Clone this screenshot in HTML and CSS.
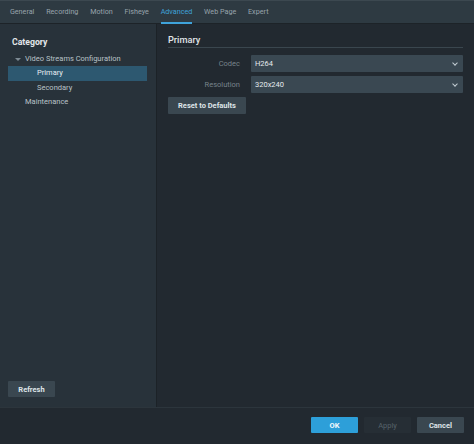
FILE: index.html
```html
<!DOCTYPE html>
<html lang="en">

<head>
  <meta charset="UTF-8">
  <meta name="viewport" content="width=device-width, initial-scale=1.0">
  <title>Camera Settings</title>
  <link rel="stylesheet" href="styles.css">
</head>

<body>
  <div class="dialog">
    <div class="tabs">
      <span class="tab">General</span>
      <span class="tab">Recording</span>
      <span class="tab">Motion</span>
      <span class="tab">Fisheye</span>
      <span class="tab active">Advanced</span>
      <span class="tab">Web Page</span>
      <span class="tab">Expert</span>
    </div>

    <div class="main">
      <div class="sidebar">
        <div class="category">Category</div>
        <ul class="tree">
          <li class="node">
            <span class="arrow"></span>Video Streams Configuration
          </li>
          <li class="node child selected">Primary</li>
          <li class="node child">Secondary</li>
          <li class="node">Maintenance</li>
        </ul>
        <div class="sidebar-footer">
          <button class="btn">Refresh</button>
        </div>
      </div>

      <div class="content">
        <div class="section-title">Primary</div>
        <div class="field">
          <label class="field-label">Codec</label>
          <div class="select">H264<span class="chevron"></span></div>
        </div>
        <div class="field">
          <label class="field-label">Resolution</label>
          <div class="select">320x240<span class="chevron"></span></div>
        </div>
        <button class="btn reset-btn">Reset to Defaults</button>
      </div>
    </div>

    <div class="footer">
      <button class="btn btn-primary">OK</button>
      <button class="btn btn-disabled">Apply</button>
      <button class="btn">Cancel</button>
    </div>
  </div>
</body>
</html>
```

FILE: styles.css
```css
html,
body {
  margin: 0;
  padding: 0;
  background-color: #222930;
}

body {
  font-family: Roboto, "Liberation Sans", sans-serif;
  font-size: 7.5px;
  color: #c9d0d5;
}

.dialog {
  width: 474px;
  height: 444px;
  display: flex;
  flex-direction: column;
}

/* top tab strip */
.tabs {
  height: 22px;
  display: flex;
  align-items: stretch;
  padding-left: 4px;
  background-color: #2e3a42;
  border-top: 1px solid #3c4850;
  border-bottom: 1px solid #1d2328;
}

.tab {
  display: flex;
  align-items: center;
  margin: 0 5.9px -1px;
  font-size: 7.2px;
  color: #98a4ac;
  border-bottom: 2px solid transparent;
}

.tab.active {
  color: #3fa3da;
  border-bottom-color: #3fa3da;
}

.main {
  height: 383px;
  display: flex;
}

.sidebar {
  width: 156px;
  display: flex;
  flex-direction: column;
  background-color: #28323a;
  border-right: 1px solid #1c2227;
}

.category {
  font-size: 8.7px;
  font-weight: bold;
  color: #e3e7ea;
  padding: 13px 0 0 12px;
  height: 15px;
}

.tree {
  list-style: none;
  margin: 0 0 0 8px;
  padding: 0;
  width: 139px;
}

.node {
  height: 14.4px;
  line-height: 14.4px;
  padding-left: 17px;
  color: #b9c2c8;
  position: relative;
}

.node.child {
  padding-left: 29px;
}

.node.selected {
  background-color: #2d5870;
  color: #e8eef2;
}

.arrow {
  position: absolute;
  left: 7px;
  top: 6px;
  border-left: 3px solid transparent;
  border-right: 3px solid transparent;
  border-top: 3px solid #7d8a93;
}

.sidebar-footer {
  margin-top: auto;
  padding: 0 0 10px 8px;
}

.content {
  flex: 1;
  padding: 10px 11px 0 11px;
}

.section-title {
  font-size: 9.2px;
  font-weight: 500;
  color: #e0e5e8;
  padding-bottom: 2px;
  border-bottom: 1px solid #3a464e;
  margin-bottom: 7px;
}

.field {
  display: flex;
  align-items: center;
  margin-bottom: 4px;
}

.field-label {
  width: 72px;
  text-align: right;
  padding-right: 11px;
  color: #77838b;
}

.select {
  flex: 1;
  height: 17px;
  display: flex;
  align-items: center;
  justify-content: space-between;
  padding: 0 6px 0 4px;
  background-color: #3a4852;
  color: #e6ebee;
  border-radius: 1px;
}

.chevron {
  width: 3px;
  height: 3px;
  border-right: 1.3px solid #c3ccd2;
  border-bottom: 1.3px solid #c3ccd2;
  transform: rotate(45deg);
  margin-top: -2px;
}

.btn {
  font-family: inherit;
  font-size: 7.5px;
  font-weight: bold;
  height: 16px;
  min-width: 47px;
  padding: 0 8px;
  border: none;
  border-radius: 1px;
  background-color: #3a4750;
  color: #dfe5e9;
}

.reset-btn {
  height: 17px;
  margin-top: 0;
  width: 78px;
  padding: 0;
}

.footer {
  flex: 1;
  display: flex;
  justify-content: flex-end;
  align-items: flex-start;
  gap: 6px;
  padding: 9px 10px 0 0;
  border-top: 1px solid #2c353c;
}

.btn-primary {
  background-color: #2d9fd9;
  color: #f3f9fc;
}

.btn-disabled {
  background-color: #262e35;
  color: #56626a;
  font-weight: normal;
}
```
